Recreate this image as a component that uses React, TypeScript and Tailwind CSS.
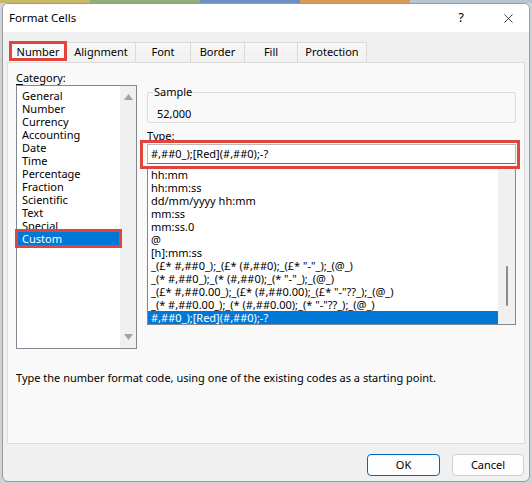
import { X } from "lucide-react";

const categories = [
  "General",
  "Number",
  "Currency",
  "Accounting",
  "Date",
  "Time",
  "Percentage",
  "Fraction",
  "Scientific",
  "Text",
  "Special",
  "Custom",
];

const formats = [
  "hh:mm",
  "hh:mm:ss",
  "dd/mm/yyyy hh:mm",
  "mm:ss",
  "mm:ss.0",
  "@",
  "[h]:mm:ss",
  '_(£* #,##0_);_(£* (#,##0);_(£* "-"_);_(@_)',
  '_(* #,##0_);_(* (#,##0);_(* "-"_);_(@_)',
  '_(£* #,##0.00_);_(£* (#,##0.00);_(£* "-"??_);_(@_)',
  '_(* #,##0.00_);_(* (#,##0.00);_(* "-"??_);_(@_)',
  "#,##0_);[Red](#,##0);-?",
];

const tabs = [
  { label: "Number", w: "w-[58px]" },
  { label: "Alignment", w: "w-[69px]" },
  { label: "Font", w: "w-[55px]" },
  { label: "Border", w: "w-[54px]" },
  { label: "Fill", w: "w-[53px]" },
  { label: "Protection", w: "w-[69px]" },
];

const App = () => {
  return (
    <div className="w-[532px] h-[484px] bg-[#cfd3d6] overflow-hidden font-['Noto_Sans',sans-serif] text-[11px] text-black">
      {/* app behind the dialog */}
      <div className="flex h-[3px]">
        <div className="w-[90px] bg-[#c9b86a]" />
        <div className="w-[110px] bg-[#8fae7a]" />
        <div className="w-[100px] bg-[#6d8fc4]" />
        <div className="w-[110px] bg-[#d99a5a]" />
        <div className="flex-1 bg-[#b7c3cf]" />
      </div>

      {/* Dialog window */}
      <div className="ml-[2px] w-[528px] h-[479px] rounded-[6px] border border-[#9a9a9a] bg-[#f0f0f0] overflow-hidden flex flex-col">
        {/* Title bar */}
        <div className="h-[28px] shrink-0 bg-white flex items-center pl-[6px] pr-[13px]">
          <span className="text-[11.5px]">Format Cells</span>
          <span className="ml-auto text-[13px] mr-[37px]">?</span>
          <X className="w-[15px] h-[15px]" strokeWidth={1.2} />
        </div>

        {/* Tabs */}
        <div className="flex pl-[6px] pt-[10px] h-[30px] shrink-0">
          {tabs.map((t, i) => (
            <div
              key={t.label}
              className={`${t.w} h-[20px] flex items-center justify-center relative ${
                i === 0
                  ? "bg-[#f9f9f9]"
                  : "border-t border-r border-[#dadada] bg-gradient-to-b from-[#f7f7f7] to-[#f0f0f0]"
              }`}
            >
              <span>{t.label}</span>
              {i === 0 && (
                <div className="absolute left-0 right-0 top-[-1px] bottom-[1px] border-[3px] border-[#e0443e]" />
              )}
            </div>
          ))}
        </div>

        {/* Content panel */}
        <div className="mx-[4px] h-[382px] shrink-0 border border-[#dcdcdc] bg-[#f9f9f9] flex flex-col">
          <div className="flex pl-[8px] pt-[7px]">
            {/* Category */}
            <div className="w-[121px] flex flex-col">
              <div className="h-[15px] leading-[15px]">
                <span className="underline underline-offset-2">C</span>ategory:
              </div>
              <div className="h-[264px] border border-[#828790] bg-white flex">
                <div className="flex-1 pt-[3px] pl-[1px]">
                  {categories.map((c) => (
                    <div
                      key={c}
                      className={`h-[13px] leading-[13px] pl-[4px] relative ${
                        c === "Custom" ? "bg-[#0078d7] text-white" : ""
                      }`}
                    >
                      {c}
                      {c === "Custom" && (
                        <div className="absolute left-[-3px] right-[-2px] top-[-3px] bottom-[-3px] border-[3px] border-[#e0443e]" />
                      )}
                    </div>
                  ))}
                </div>
                <div className="w-[16px] bg-[#f0f0f0] flex flex-col items-center justify-between py-[8px]">
                  <svg width="9" height="6" viewBox="0 0 9 6">
                    <path d="M4.5 0 L9 6 L0 6 Z" fill="#a3a3a3" />
                  </svg>
                  <svg width="9" height="6" viewBox="0 0 9 6">
                    <path d="M0 0 L9 0 L4.5 6 Z" fill="#a3a3a3" />
                  </svg>
                </div>
              </div>
            </div>

            {/* Right side */}
            <div className="ml-[10px] w-[369px] flex flex-col">
              {/* Sample group */}
              <div className="mt-[22px] h-[31px] border border-[#dcdcdc] rounded-[2px] relative pl-[9px] pt-[13px]">
                <span className="absolute left-[5px] top-[-9px] bg-[#f9f9f9] px-[1px] leading-[15px]">
                  Sample
                </span>
                <span className="leading-[15px]">52,000</span>
              </div>

              <div className="mt-[5px] h-[15px] leading-[15px]">
                <span className="underline underline-offset-2">T</span>ype:
              </div>

              {/* Type input */}
              <div className="mt-[1px] relative">
                <div className="h-[20px] border border-[#b8b8b8] border-b-[#6e6e6e] bg-white flex items-center pl-[3px]">
                  #,##0_);[Red](#,##0);-?
                </div>
                <div className="absolute left-[-7px] right-[-4px] top-[-4px] bottom-[-5px] border-[3px] border-[#e0443e]" />
              </div>

              {/* Type list */}
              <div className="mt-[2px] h-[159px] border border-[#828790] bg-white flex">
                <div className="flex-1 pt-[1px] overflow-hidden">
                  {formats.map((f, i) => (
                    <div
                      key={i}
                      className={`h-[13px] leading-[13px] pl-[3px] whitespace-nowrap ${
                        i === formats.length - 1 ? "bg-[#0078d7] text-white" : ""
                      }`}
                    >
                      {f}
                    </div>
                  ))}
                </div>
                <div className="w-[17px] bg-[#f0f0f0] flex justify-center">
                  <div className="mt-[99px] w-[2px] h-[40px] bg-[#8a8a8a] rounded-full" />
                </div>
              </div>
            </div>
          </div>

          <div className="mt-[21px] pl-[8px] leading-[15px]">
            Type the number format code, using one of the existing codes as a starting point.
          </div>
        </div>

        {/* Footer */}
        <div className="flex justify-end gap-[12px] pr-[5px] pt-[10px]">
          <button className="w-[73px] h-[22px] rounded-[4px] border border-[#0067c0] bg-[#fdfdfd] text-[11px]">
            OK
          </button>
          <button className="w-[72px] h-[22px] rounded-[4px] border border-[#d0d0d0] bg-[#fdfdfd] text-[11px]">
            Cancel
          </button>
        </div>
      </div>
    </div>
  );
};

export default App;
